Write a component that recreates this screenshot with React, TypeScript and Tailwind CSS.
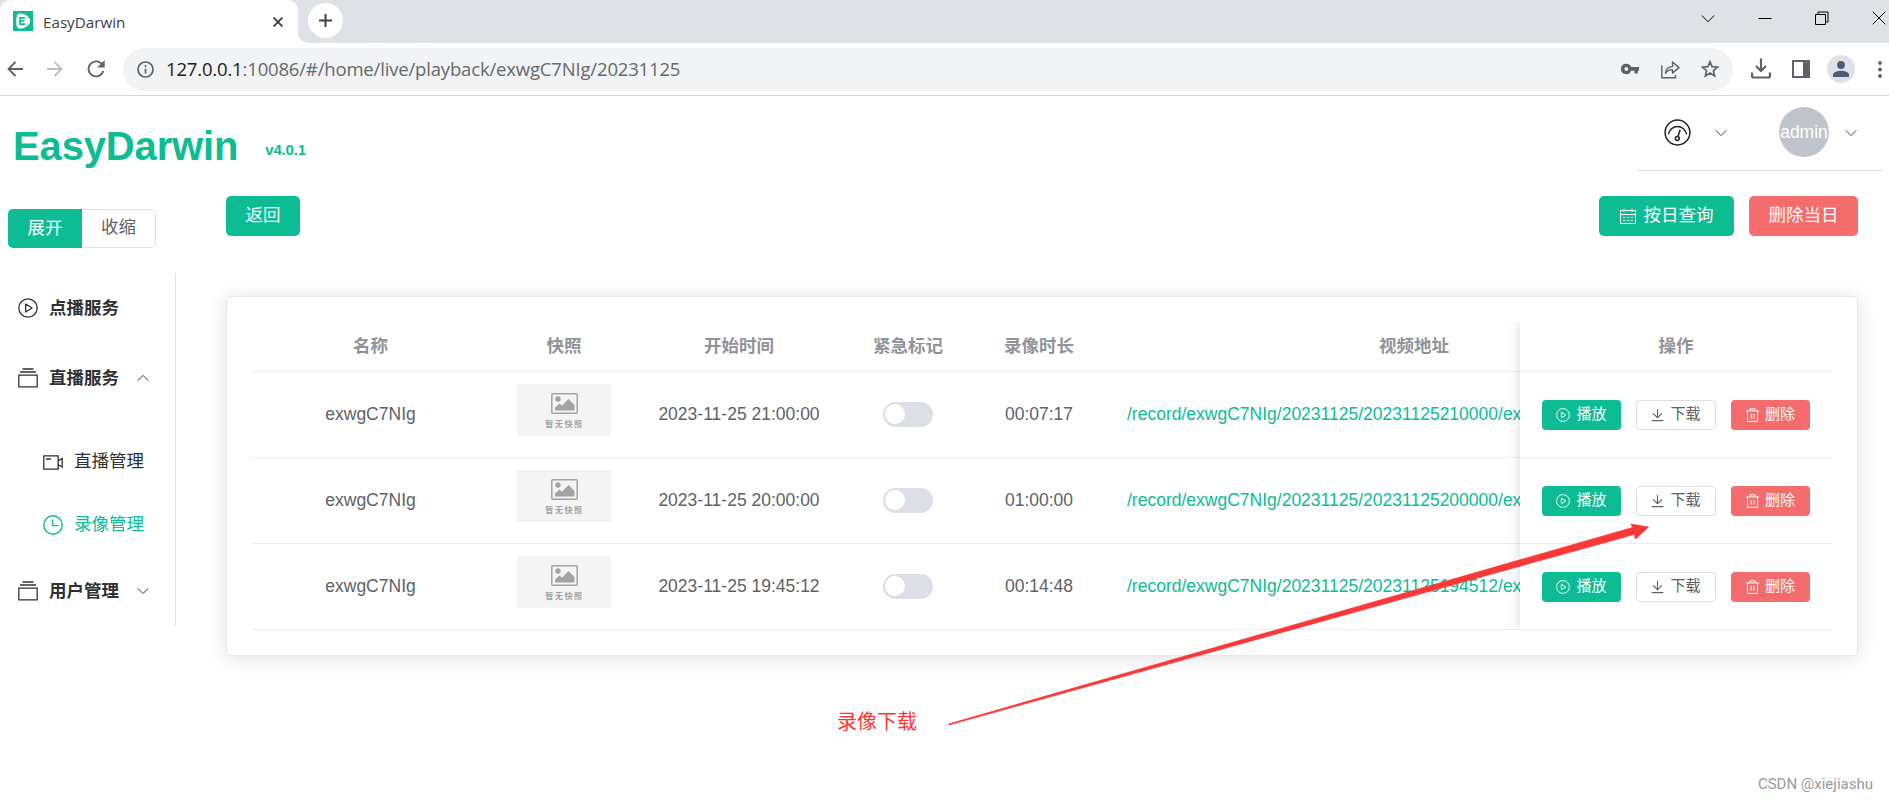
import React from 'react';

interface RecordRow {
  name: string;
  startAt: string;
  duration: string;
  url: string;
}

const records: RecordRow[] = [
  { name: 'exwgC7NIg', startAt: '2023-11-25 21:00:00', duration: '00:07:17', url: '/record/exwgC7NIg/20231125/20231125210000/ex' },
  { name: 'exwgC7NIg', startAt: '2023-11-25 20:00:00', duration: '01:00:00', url: '/record/exwgC7NIg/20231125/20231125200000/ex' },
  { name: 'exwgC7NIg', startAt: '2023-11-25 19:45:12', duration: '00:14:48', url: '/record/exwgC7NIg/20231125/20231125194512/ex' },
];

const columns = 'grid grid-cols-[237px_150px_200px_138px_124px_626px] w-[1475px]';

type IconProps = { className?: string; size?: number };

function Chevron({ className = '', up = false, size = 12 }: IconProps & { up?: boolean }) {
  return (
    <svg width={size} height={size} viewBox="0 0 12 12" fill="none" stroke="currentColor" className={className}>
      <path d={up ? 'M.8 8.6 6 3.4l5.2 5.2' : 'M.8 3.4 6 8.6l5.2-5.2'} />
    </svg>
  );
}

function PlayIcon({ size = 20, className = '', stroke = 1.3 }: IconProps & { stroke?: number }) {
  return (
    <svg width={size} height={size} viewBox="0 0 20 20" fill="none" stroke="currentColor" strokeWidth={stroke} className={className}>
      <circle cx="10" cy="10" r="9.2" />
      <path d="M7.7 6v8l6.4-4z" strokeLinejoin="round" />
    </svg>
  );
}

function StackIcon() {
  return (
    <svg width="20" height="20" viewBox="0 0 20 20" fill="none" stroke="currentColor" strokeWidth="1.3">
      <path d="M.8 7.2h18.4v11.6H.8zM2 4h16M4.5 1h11" />
    </svg>
  );
}

function CameraIcon() {
  return (
    <svg width="20" height="20" viewBox="0 0 20 20" fill="none" stroke="currentColor" strokeWidth="1.3">
      <path d="M.8 3.8h14.4v13.4H.8zM3 7h5M15.4 8.8l3.8-2.4V15l-3.8-2.2" />
    </svg>
  );
}

function ClockIcon() {
  return (
    <svg width="20" height="20" viewBox="0 0 20 20" fill="none" stroke="currentColor" strokeWidth="1.4">
      <circle cx="10" cy="10" r="9.2" />
      <path d="M9.6 4.5v6.1h6" />
    </svg>
  );
}

function DownloadIcon() {
  return (
    <svg width="13" height="14" viewBox="0 0 13 14" fill="none" stroke="currentColor" strokeWidth="1.1">
      <path d="M6.5 1v8.6M2 5.4l4.5 4.3L11 5.4M.7 12.6h11.6" />
    </svg>
  );
}

function TrashIcon() {
  return (
    <svg width="13" height="14" viewBox="0 0 13 14" fill="none" stroke="currentColor">
      <path d="M0 2.9h13M1.5 3v10.4h10V3M4 2.6V.8h5v1.8M5.1 5.8v4.8M7.9 5.8v4.8" />
    </svg>
  );
}

function CalendarIcon() {
  return (
    <svg width="16" height="17" viewBox="0 0 16 17" fill="none" stroke="currentColor" className="mt-0.5">
      <path d="M.5 2.5h15v13H.5zM.5 6.5h15M4 .5v3.4M12 .5v3.4" />
      <path d="M3.2 9.5h2.2M6.9 9.5h2.2M10.6 9.5h2.2M3.2 12.5h2.2M6.9 12.5h2.2M10.6 12.5h2.2" />
    </svg>
  );
}

function GaugeIcon() {
  return (
    <svg width="27" height="27" viewBox="0 0 27 27" fill="none" stroke="#222" strokeWidth="1.5">
      <circle cx="13.5" cy="13.5" r="12.4" />
      <path d="M4.5 15.3A9.1 9.1 0 0 1 22.500 15.300" />
      <circle cx="13.3" cy="19.4" r="2" />
      <path d="M14 17.4 16.100 10.800" />
    </svg>
  );
}

function TabStrip() {
  return (
    <div className="flex h-[43px] bg-[#dee1e6]">
      <div className="relative flex h-[43px] w-[298px] items-center rounded-t-[10px] bg-white">
        <svg width="20" height="20" viewBox="0 0 20 20" className="mb-px ml-[13px]">
          <path fill="#0dbc93" d="M0 0h20v20H0z" />
          <path fill="#fff" d="M4 4.5C4.300 2.300 7.500 2 10.500 3c4.500 1.500 6.700 4.500 6.700 7s-2.200 5.500-6.700 7C7.500 18 4.300 17.700 3.800 15.500c-.8-3.500-.8-7.500.2-11z" />
          <path fill="none" stroke="#0dbc93" strokeWidth="1.700" d="M12 6.800H7v6.400h5M7 10h4.500" />
        </svg>
        <span className="ml-[10px] mt-px text-[15.2px] text-[#3c4043]">EasyDarwin</span>
        <svg width="10" height="10" viewBox="0 0 10 10" stroke="#3c4043" strokeWidth="1.900" className="ml-auto mr-[15px]">
          <path d="m.6.6 8.800 8.800M9.400.6.6 9.400" />
        </svg>
        <svg width="10" height="10" viewBox="0 0 10 10" className="absolute bottom-0 left-full">
          <path fill="#fff" d="M0 0v10h10A10 10 0 0 1 0 0z" />
        </svg>
      </div>
      <div className="ml-[10px] mt-[3px] flex size-[35px] items-center justify-center rounded-full bg-white">
        <svg width="13" height="13" viewBox="0 0 13 13" stroke="#3c4043" strokeWidth="2">
          <path d="M6.500 0v13M0 6.500h13" />
        </svg>
      </div>
      <div className="ml-auto mr-[3px] mt-[11px] flex h-[14px] items-center text-black">
        <svg width="14" height="14" viewBox="0 0 14 14" fill="none" stroke="currentColor"><path d="m.8 4.500 6.200 6.200L13.200 4.500" /></svg>
        <svg width="14" height="14" viewBox="0 0 14 14" stroke="currentColor" className="ml-[43px]"><path d="M.5 7.500h13" /></svg>
        <svg width="14" height="14" viewBox="0 0 14 14" fill="none" stroke="currentColor" className="ml-[43px]"><path d="M.5 3.500h10v10H.5zM3 3.500v-2.500h10v10h-2.500" /></svg>
        <svg width="14" height="14" viewBox="0 0 14 14" stroke="currentColor" className="ml-[43px]"><path d="m.7.7 12.600 12.600M13.300.7.7 13.300" /></svg>
      </div>
    </div>
  );
}

function AddressBar() {
  return (
    <div className="flex h-[53px] items-center border-b border-[#d5d7da] bg-white text-[#5f6368]">
      <svg width="18" height="18" viewBox="0 0 18 18" fill="none" stroke="currentColor" strokeWidth="1.900" className="mb-px ml-[6px]"><path d="M17 9H2.500M9.500 2 2.500 9l7 7" /></svg>
      <svg width="18" height="18" viewBox="0 0 18 18" fill="none" stroke="#bbbdc0" strokeWidth="1.900" className="mb-px ml-[22px]"><path d="M1 9h14.500M8.500 2l7 7-7 7" /></svg>
      <svg width="18" height="18" viewBox="0 0 18 18" fill="none" stroke="currentColor" strokeWidth="1.900" className="ml-[23px]">
        <path d="M15.200 4.500A7.500 7.500 0 1 0 16.300 11" />
        <path fill="currentColor" stroke="none" d="M17.700 0v7.500h-7.500z" />
      </svg>
      <div className="ml-[18px] flex h-[43px] w-[1610px] items-center rounded-full bg-[#f1f3f4]">
        <svg width="17" height="17" viewBox="0 0 17 17" fill="none" stroke="currentColor" strokeWidth="1.700" className="ml-[14px]">
          <circle cx="8.500" cy="8.500" r="7.500" />
          <path d="M8.500 7.500v5M8.500 4.300v1.800" />
        </svg>
        <span className="ml-[12px] whitespace-nowrap text-[18.500px] tracking-[-0.170px] text-[#66696d]"><span className="text-[#202124]">127.0.0.1</span>:10086/#/home/live/playback/exwgC7NIg/20231125</span>
        <div className="ml-auto mr-[14px] flex items-center">
          <svg width="18" height="12" viewBox="0 0 18 12" fill="currentColor">
            <path fillRule="evenodd" d="M5.300.8a5.200 5.200 0 0 1 4.800 3.300H18v3.600h-1.200v2.800h-3.400V7.700h-3.300A5.200 5.200 0 1 1 5.300.8zm0 3.300a1.900 1.900 0 1 0 0 3.800 1.900 1.900 0 0 0 0-3.800z" />
          </svg>
          <svg width="19" height="19" viewBox="0 0 19 19" fill="none" stroke="currentColor" strokeWidth="1.400" className="ml-[22px]">
            <path d="M.8 5.500v12.300h13.700V15" />
            <path d="M4.500 13.300c.3-4.300 2.700-6.500 7-6.700V2l6.500 5.600-6.500 5.500V9.600c-3.200 0-5.200 1-7 3.700z" strokeLinejoin="round" />
          </svg>
          <svg width="18" height="18" viewBox="0 0 18 18" fill="none" stroke="currentColor" strokeWidth="1.700" className="ml-[21px]">
            <path d="m9 1.800 2.100 4.900 5.300.5-4 3.500 1.200 5.200L9 13.100l-4.600 2.800 1.200-5.200-4-3.500 5.300-.5z" />
          </svg>
        </div>
      </div>
      <svg width="20" height="21" viewBox="0 0 20 21" fill="none" stroke="currentColor" strokeWidth="2.200" className="mb-px ml-[18px]">
        <path d="M10 .5v12M1.100 14.500v3.500q0 1.500 1.500 1.500h14.800q1.500 0 1.500-1.500v-3.500" />
        <path d="M5 8l5 5 5-5" />
      </svg>
      <svg width="18" height="18" viewBox="0 0 18 18" fill="none" stroke="currentColor" strokeWidth="2" className="mb-px ml-[21px]">
        <path d="M1 1h16v16H1z" />
        <path fill="currentColor" stroke="none" d="M11 0h7v18h-7z" />
      </svg>
      <div className="ml-[17px] flex size-[28px] items-center justify-center rounded-full bg-[#dee1e6] text-[#4d5b73]">
        <svg width="16" height="16" viewBox="0 0 16 16" fill="currentColor">
          <circle cx="8" cy="4" r="3.900" />
          <path d="M0 16v-2.500C0 11 5 9.700 8 9.700s8 1.300 8 3.800V16z" />
        </svg>
      </div>
      <svg width="4" height="17" viewBox="0 0 4 17" fill="currentColor" className="ml-[23px] shrink-0">
        <circle cx="2" cy="2" r="1.900" />
        <circle cx="2" cy="8.500" r="1.900" />
        <circle cx="2" cy="15" r="1.900" />
      </svg>
    </div>
  );
}

function AppHeader() {
  return (
    <header className="flex h-[75px] justify-between">
      <div className="flex items-baseline pl-[13px] pt-[27px] font-bold text-[#0dbc93]">
        <h1 className="text-[40px] leading-[46px] tracking-[-0.15px]">EasyDarwin</h1>
        <span className="relative -top-[5px] ml-[27px] text-[15px] tracking-[-0.2px]">v4.0.1</span>
      </div>
      <div className="mr-[6px] flex w-[246px] items-center border-b border-[#dcdfe6] pb-[2px] pl-[27px] text-[#444]">
        <GaugeIcon />
        <Chevron className="ml-[24px] mt-[1px]" />
        <div className="ml-[52px] flex size-[50px] shrink-0 items-center justify-center rounded-full bg-[#c0c4cc] text-[17.5px] text-white">admin</div>
        <Chevron className="ml-[16px] mt-[2px]" />
      </div>
    </header>
  );
}

function Sidebar() {
  return (
    <aside className="w-[176px] pt-[38px] text-[17.5px] text-[#303133]">
      <div className="ml-2 flex h-[39px] w-[148px] text-[#606266]">
        <button className="w-[74px] rounded-l-[5px] bg-[#0dbc93] text-white">展开</button>
        <button className="w-[74px] rounded-r-[5px] border border-l-0 border-[#dcdfe6] pb-0.5">收缩</button>
      </div>
      <nav className="mt-[25px] h-[353px] border-r border-[#dcdfe6]">
        <div className="flex h-[70px] items-center pl-[18px] font-bold">
          <PlayIcon />
          <span className="ml-[11px]">点播服务</span>
        </div>
        <div className="flex h-[70px] items-center pl-[18px] font-bold">
          <StackIcon />
          <span className="ml-[11px]">直播服务</span>
          <Chevron up className="ml-[18px]" />
        </div>
        <div className="pt-[17px]">
          <div className="flex h-[63px] items-center pl-[43px]">
            <CameraIcon />
            <span className="ml-[11px]">直播管理</span>
          </div>
          <div className="flex h-[63px] items-center pl-[43px] text-[#0dbc93]">
            <ClockIcon />
            <span className="ml-[11px]">录像管理</span>
          </div>
        </div>
        <div className="flex h-[70px] items-center pl-[18px] font-bold">
          <StackIcon />
          <span className="ml-[11px]">用户管理</span>
          <Chevron className="ml-[18px]" />
        </div>
      </nav>
    </aside>
  );
}

function Snapshot() {
  return (
    <div className="mt-[12px] flex h-[52px] w-[94px] flex-col items-center self-start bg-[#f4f4f4] pt-[9px] text-[#a3a3a3]">
      <svg width="27" height="21" viewBox="0 0 27 21" fill="currentColor">
        <rect x=".8" y=".8" width="25.400" height="19.400" rx="1" fill="none" stroke="currentColor" strokeWidth="1.500" />
        <circle cx="7" cy="6" r="2.700" />
        <path d="M4 17.500v-3l4.500-4 2.500 2.300 6.500-6.800 6 6v5.500z" />
      </svg>
      <span className="mt-[5px] pl-[1px] text-[8px] font-bold leading-[12px] tracking-[1.6px]">暂无快照</span>
    </div>
  );
}

function RecordTable() {
  return (
    <section className="relative h-[308px] w-[1580px] overflow-hidden text-[17.5px]">
      <div className={`${columns} h-[50px] items-center border-b border-[#ebeef5] text-center font-bold text-[#909399]`}>
        <span>名称</span>
        <span>快照</span>
        <span>开始时间</span>
        <span>紧急标记</span>
        <span>录像时长</span>
        <span>视频地址</span>
      </div>
      {records.map(r => (
        <div key={r.startAt} className={`${columns} h-[86px] items-center justify-items-center border-b border-[#ebeef5] text-[#606266]`}>
          <span>{r.name}</span>
          <Snapshot />
          <span>{r.startAt}</span>
          <div className="h-[25px] w-[50px] rounded-full bg-[#dcdfe6] p-[2px]">
            <div className="size-[20px] rounded-full bg-white" />
          </div>
          <span>{r.duration}</span>
          <span className="justify-self-start whitespace-nowrap pl-[26px] text-[#0dbc93]">{r.url}</span>
        </div>
      ))}

      {/* fixed action column, lies over the scrolling part */}
      <div className="absolute right-0 top-0 w-[312px] bg-white shadow-[0_0_12px_rgba(0,0,0,0.16)]">
        <div className="flex h-[50px] items-center justify-center border-b border-[#ebeef5] font-bold text-[#909399]">操作</div>
        {records.map(r => (
          <div key={r.startAt} className="flex h-[86px] items-center gap-[15px] border-b border-[#ebeef5] pl-[22px] text-[15px]">
            <button className="flex h-[30px] w-[79px] items-center justify-center gap-[6px] rounded-[4px] bg-[#0dbc93] text-white">
              <PlayIcon size={14} stroke={1.4} />播放
            </button>
            <button className="flex h-[30px] w-[80px] items-center justify-center gap-[6px] rounded-[4px] border border-[#dcdfe6] text-[#606266]">
              <DownloadIcon />下载
            </button>
            <button className="flex h-[30px] w-[79px] items-center justify-center gap-[6px] rounded-[4px] bg-[#f56c6c] text-white">
              <TrashIcon />删除
            </button>
          </div>
        ))}
      </div>
    </section>
  );
}

export default function App() {
  return (
    <div className="relative h-[801px] w-[1889px] overflow-hidden bg-white font-['Liberation_Sans','Noto_Sans_CJK_SC',sans-serif]">
      <div className="font-['Open_Sans','Noto_Sans',sans-serif]">
        <TabStrip />
        <AddressBar />
      </div>
      <AppHeader />
      <div className="flex">
        <Sidebar />
        <main className="ml-[50px] w-[1632px] pt-[25px]">
          <div className="flex h-[40px] text-[17.5px] text-white">
            <button className="w-[74px] rounded-[5px] bg-[#0dbc93] pb-0.5">返回</button>
            <button className="ml-auto flex w-[135px] items-center justify-center gap-2 rounded-[5px] bg-[#0dbc93] pb-0.5">
              <CalendarIcon />按日查询
            </button>
            <button className="ml-[15px] w-[109px] rounded-[5px] bg-[#f56c6c] pb-0.5">删除当日</button>
          </div>
          <div className="mt-[60px] h-[360px] rounded-[5px] border border-[#e4e7ed] px-[25px] pt-[25px] shadow-[0_2px_20px_rgba(0,0,0,0.12)]">
            <RecordTable />
          </div>
        </main>
      </div>

      {/* annotation drawn over the page */}
      <svg width="1889" height="801" viewBox="0 0 1889 801" className="pointer-events-none absolute left-0 top-0">
        <path fill="#fb3838" stroke="#fb3838" strokeWidth=".7" d="M948.500 724 1632.500 527.500 1631 524l17.500 3L1635.500 539 1634 534.500 949 725z" />
      </svg>
      <span className="absolute left-[837px] top-[707px] text-[20px] leading-[30px] text-[#fb3838]">录像下载</span>
      <span className="absolute right-[16px] top-[773px] font-['Roboto',sans-serif] text-[15px] leading-[22px] text-[#999]">CSDN @xiejiashu</span>
    </div>
  );
}
